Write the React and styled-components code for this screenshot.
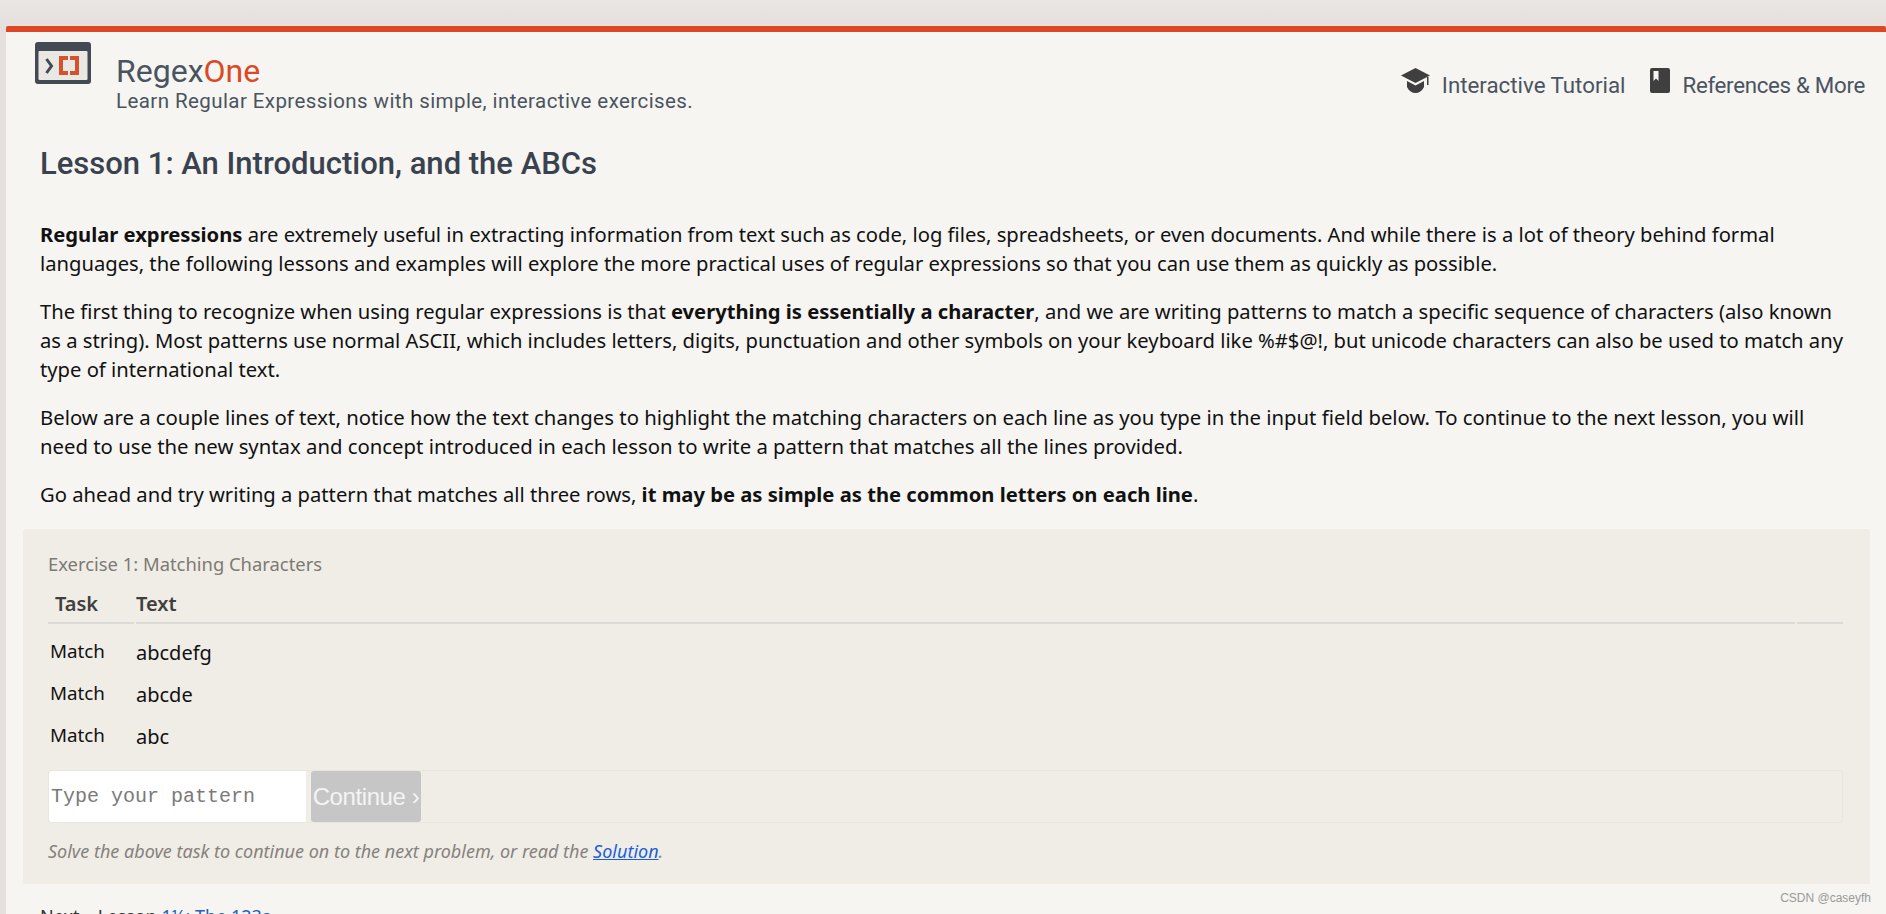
import styled, { createGlobalStyle } from "styled-components";

const GlobalStyle = createGlobalStyle`
  html, body {
    margin: 0;
    height: 914px;
    overflow: hidden;
    background: linear-gradient(#e9e6e3, #e5e0dd 26px);
  }
`;

const Shell = styled.div`
  padding: 26px 0 0 6px;
`;

const Page = styled.div`
  height: 900px;
  background: #f6f5f1;
  border-top: 6px solid #dc4826;
  border-radius: 2px 2px 0 0;
  font-family: "Noto Sans", sans-serif;
  color: #111;
`;

const Header = styled.header`
  display: flex;
  justify-content: space-between;
  padding: 10px 21px 0 29px;
`;

const Brand = styled.div`
  display: flex;
  gap: 25px;
`;

const BrandText = styled.div`
  padding-top: 11px;
  font-family: "Roboto", sans-serif;
  color: #4a5460;
`;

const BrandName = styled.div`
  font-size: 32px;
  line-height: 37px;
  span {
    color: #dc4826;
  }
`;

const Tagline = styled.div`
  font-size: 20.5px;
  line-height: 22px;
  letter-spacing: 0.42px;
`;

const Nav = styled.nav`
  display: flex;
  gap: 25px;
  padding-top: 26px;
`;

const NavLink = styled.a`
  display: flex;
  gap: 12px;
  font: 22.3px/34px "Roboto", sans-serif;
  letter-spacing: ${(p) => p.$spacing || 0}px;
  color: #4a5460;
`;

const Main = styled.main`
  padding: 0 16px 0 34px;
`;

const Title = styled.h1`
  margin: 32px 0 36px;
  font: 500 31px/40px "Roboto", sans-serif;
  color: #39424e;
`;

const Para = styled.p`
  max-width: 1811px;
  margin: 0 0 19px;
  font-size: ${(p) => p.$size || 20.2}px;
  line-height: 29px;
`;

const Panel = styled.section`
  margin: 20px 0 0 -17px;
  height: 355px;
  box-sizing: border-box;
  padding: 23px 26px 0 25px;
  background: #f0ede6;
  border-radius: 2px;
`;

const PanelTitle = styled.div`
  font-size: 18.4px;
  line-height: 24px;
  color: #7d7a75;
`;

const TableGrid = styled.div`
  display: grid;
  grid-template-columns: 86px 1659px 46px;
  column-gap: 2px;
  margin-top: 15px;
`;

const Head = styled.div`
  height: 33px;
  box-sizing: border-box;
  padding-left: ${(p) => p.$inset}px;
  border-bottom: 2px solid #dbdad7;
  font-size: 20px;
  font-weight: 600;
  line-height: 26px;
  color: #3f3f3f;
`;

const TaskCell = styled.div`
  height: 42px;
  box-sizing: border-box;
  padding: 15px 0 0 2px;
  font-size: 18.8px;
  line-height: 24px;
  color: #111;
`;

const TextCell = styled.div`
  grid-column: span 2;
  height: 42px;
  box-sizing: border-box;
  padding: 17px 0 0;
  font-size: 20px;
  line-height: 24px;
  color: #111;
`;

const InputRow = styled.div`
  display: flex;
  gap: 5px;
  width: 1795px;
  height: 53px;
  margin-top: 20px;
  box-sizing: border-box;
  border: 1px solid #e8e6df;
  border-radius: 3px;
`;

const PatternInput = styled.input`
  width: 257px;
  box-sizing: border-box;
  padding: 0 2px;
  border: 0;
  border-radius: 3px 0 0 3px;
  background: #fff;
  font: 20px "Liberation Mono", monospace;
  &::placeholder {
    color: #7a7a7a;
  }
`;

const ContinueButton = styled.button`
  width: 110px;
  padding: 0;
  border: 0;
  border-radius: 3px;
  background: #c6c6c6;
  color: #f4f4f4;
  font: 24px "Liberation Sans", sans-serif;
  letter-spacing: -0.4px;
  white-space: nowrap;
`;

const Hint = styled.div`
  margin-top: 16px;
  font-size: 18px;
  line-height: 24px;
  font-style: italic;
  color: #85827d;
  a {
    color: #1c5fd8;
    text-decoration: underline;
  }
`;

const NextLine = styled.div`
  margin-top: 20px;
  font-size: 18px;
  line-height: 24px;
  color: #333;
  a {
    color: #2c5fb8;
  }
`;

const Watermark = styled.div`
  position: absolute;
  right: 15px;
  top: 891px;
  font: 12px/14px "Liberation Sans", sans-serif;
  color: #9a9a9a;
`;

function Logo() {
  return (
    <svg width="56" height="42" viewBox="0 0 56 42">
      <rect width="56" height="42" rx="3" fill="#434a54" />
      <rect x="3.5" y="9" width="49" height="29" rx="1" fill="#e9e8e2" />
      <path d="M11.5 17l5 7-5 7" fill="none" stroke="#434a54" strokeWidth="3" />
      <path d="M33 16h-7v15h7M35 16h7v15h-7" fill="none" stroke="#d5522a" strokeWidth="4" />
    </svg>
  );
}

function CapIcon() {
  return (
    <svg width="29" height="25" viewBox="0 0 29 25">
      <path fill="#3f3f3f" d="M14.5 0L29 7.5 14.5 15 0 7.5z" />
      <path fill="#3f3f3f" d="M6 13l8.5 4.5L23 13v6c-2 4-5 6-8.5 6S8 23 6 19z" />
      <path fill="#3f3f3f" d="M26 9h1.5v8H26z" />
    </svg>
  );
}

function BookIcon() {
  return (
    <svg width="20" height="25" viewBox="0 0 20 25">
      <path
        fill="#3f3f3f"
        fillRule="evenodd"
        d="M2 0h16a2 2 0 0 1 2 2v21a2 2 0 0 1-2 2H2a2 2 0 0 1-2-2V2a2 2 0 0 1 2-2zM3.5 3v10L6 10.5 8.5 13V3z"
      />
    </svg>
  );
}

const rows = ["abcdefg", "abcde", "abc"];

export default function App() {
  return (
    <Shell>
      <GlobalStyle />
      <Page>
        <Header>
          <Brand>
            <Logo />
            <BrandText>
              <BrandName>
                Regex<span>One</span>
              </BrandName>
              <Tagline>Learn Regular Expressions with simple, interactive exercises.</Tagline>
            </BrandText>
          </Brand>
          <Nav>
            <NavLink>
              <CapIcon />
              Interactive Tutorial
            </NavLink>
            <NavLink $spacing={-0.3}>
              <BookIcon />
              References &amp; More
            </NavLink>
          </Nav>
        </Header>
        <Main>
          <Title>Lesson 1: An Introduction, and the ABCs</Title>
          <Para>
            <b>Regular expressions</b> are extremely useful in extracting information from text such as code, log files, spreadsheets, or even documents. And while there is a lot of theory behind formal languages, the following lessons and examples will explore the more practical uses of regular expressions so that you can use them as quickly as possible.
          </Para>
          <Para>
            The first thing to recognize when using regular expressions is that <b>everything is essentially a character</b>, and we are writing patterns to match a specific sequence of characters (also known as a string). Most patterns use normal ASCII, which includes letters, digits, punctuation and other symbols on your keyboard like %#$@!, but unicode characters can also be used to match any type of international text.
          </Para>
          <Para $size={20.32}>
            Below are a couple lines of text, notice how the text changes to highlight the matching characters on each line as you type in the input field below. To continue to the next lesson, you will need to use the new syntax and concept introduced in each lesson to write a pattern that matches all the lines provided.
          </Para>
          <Para>
            Go ahead and try writing a pattern that matches all three rows, <b>it may be as simple as the common letters on each line</b>.
          </Para>
          <Panel>
            <PanelTitle>Exercise 1: Matching Characters</PanelTitle>
            <TableGrid>
              <Head $inset={7}>Task</Head>
              <Head $inset={0}>Text</Head>
              <Head $inset={0} />
              {rows.map((text) => (
                <>
                  <TaskCell>Match</TaskCell>
                  <TextCell>{text}</TextCell>
                </>
              ))}
            </TableGrid>
            <InputRow>
              <PatternInput placeholder="Type your pattern" />
              <ContinueButton>Continue ›</ContinueButton>
            </InputRow>
            <Hint>
              Solve the above task to continue on to the next problem, or read the <a>Solution</a>.
            </Hint>
          </Panel>
          <NextLine>
            Next – Lesson <a>1½: The 123s</a>
          </NextLine>
        </Main>
      </Page>
      <Watermark>CSDN @caseyfh</Watermark>
    </Shell>
  );
}
